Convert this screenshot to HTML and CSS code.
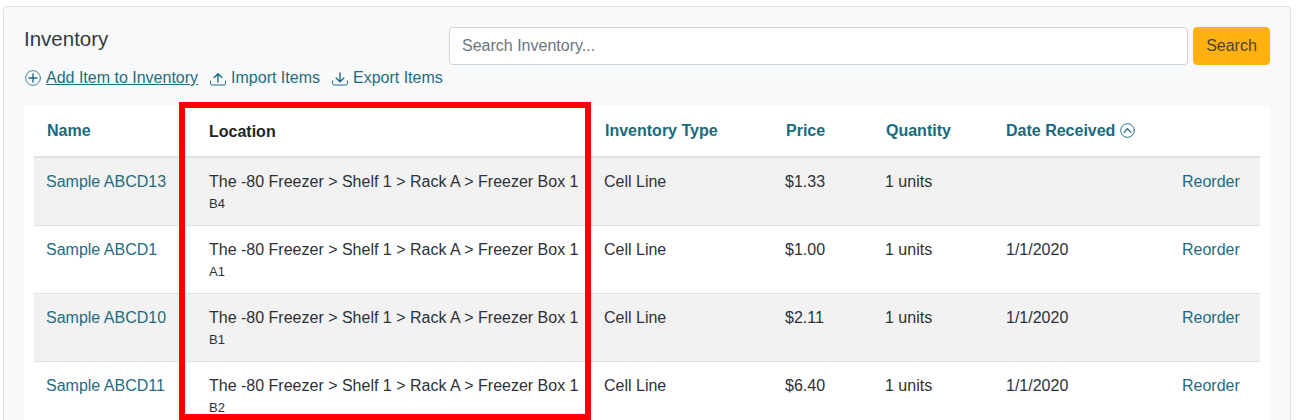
FILE: index.html
```html
<!DOCTYPE html>
<html lang="en">
<head>
<meta charset="utf-8">
<title>Inventory</title>
<link rel="stylesheet" href="styles.css">
</head>
<body>
<main class="panel">
  <header class="top">
    <div class="intro">
      <h1 class="title">Inventory</h1>
      <nav class="actions">
        <a class="action" href="#"><svg class="icon" viewBox="0 0 16 16"><circle class="ring" cx="8" cy="8" r="7.4"/><path class="bold" d="M8 4v8M4 8h8"/></svg><span class="underlined">Add Item to Inventory</span></a>
        <a class="action" href="#"><svg class="icon" viewBox="0 0 16 16"><path d="M.5 11v2.500A1.500 1.500 0 0 0 2 15h12a1.500 1.500 0 0 0 1.500-1.500V11"/><path class="bold" d="M8 12V4M4.200 7.500 8 3.700l3.800 3.800"/></svg><span>Import Items</span></a>
        <a class="action" href="#"><svg class="icon" viewBox="0 0 16 16"><path d="M.5 11v2.500A1.500 1.500 0 0 0 2 15h12a1.500 1.500 0 0 0 1.500-1.500V11"/><path class="bold" d="M8 3v8.500M4.200 8 8 11.800 11.800 8"/></svg><span>Export Items</span></a>
      </nav>
    </div>
    <form class="search">
      <input class="search-input" type="text" placeholder="Search Inventory...">
      <button class="search-button" type="button">Search</button>
    </form>
  </header>
  <section class="card">
    <table class="grid">
      <colgroup>
        <col class="c-name"><col class="c-loc"><col class="c-type"><col class="c-price"><col class="c-qty"><col class="c-date"><col class="c-act">
      </colgroup>
      <thead>
        <tr>
          <th>Name</th>
          <th class="plain">Location</th>
          <th>Inventory Type</th>
          <th>Price</th>
          <th>Quantity</th>
          <th class="date">Date Received <svg class="icon sort" viewBox="0 0 16 16"><circle cx="8" cy="8" r="7.300"/><path class="bold" d="M4.300 10 8 6l3.700 4"/></svg></th>
          <th></th>
        </tr>
      </thead>
      <tbody>
        <tr class="odd">
          <td><a href="#">Sample ABCD13</a></td>
          <td>The -80 Freezer &gt; Shelf 1 &gt; Rack A &gt; Freezer Box 1<small class="slot">B4</small></td>
          <td>Cell Line</td><td>$1.33</td><td>1 units</td><td></td>
          <td><a href="#">Reorder</a></td>
        </tr>
        <tr>
          <td><a href="#">Sample ABCD1</a></td>
          <td>The -80 Freezer &gt; Shelf 1 &gt; Rack A &gt; Freezer Box 1<small class="slot">A1</small></td>
          <td>Cell Line</td><td>$1.00</td><td>1 units</td><td>1/1/2020</td>
          <td><a href="#">Reorder</a></td>
        </tr>
        <tr class="odd">
          <td><a href="#">Sample ABCD10</a></td>
          <td>The -80 Freezer &gt; Shelf 1 &gt; Rack A &gt; Freezer Box 1<small class="slot">B1</small></td>
          <td>Cell Line</td><td>$2.11</td><td>1 units</td><td>1/1/2020</td>
          <td><a href="#">Reorder</a></td>
        </tr>
        <tr>
          <td><a href="#">Sample ABCD11</a></td>
          <td>The -80 Freezer &gt; Shelf 1 &gt; Rack A &gt; Freezer Box 1<small class="slot">B2</small></td>
          <td>Cell Line</td><td>$6.40</td><td>1 units</td><td>1/1/2020</td>
          <td><a href="#">Reorder</a></td>
        </tr>
      </tbody>
    </table>
  </section>
</main>
<div class="highlight"></div>
</body>
</html>
```
FILE: styles.css
```css
* { box-sizing: border-box; }
html, body { height: 420px; overflow: hidden; }
body {
  margin: 0;
  padding: 6px 7px 0 3px;
  background: #fff;
  color: #2d3135;
  font: 16px/24px "Liberation Sans", Arial, sans-serif;
  position: relative;
}
a { color: #1f6c80; text-decoration: none; }
.panel {
  background: #f8f9fa;
  border: 1px solid #dfdfdf;
  border-radius: 4px;
  padding: 20px 20px 0;
  height: 420px;
  overflow: hidden;
}
.top { display: flex; align-items: flex-start; height: 79px; }
.intro { width: 425px; flex: none; }
.title { margin: 0; font-size: 20.5px; font-weight: 400; line-height: 24px; color: #343a40; }
.actions { display: flex; gap: 12px; margin-top: 15px; margin-left: 1px; }
.action { display: flex; align-items: center; gap: 5px; white-space: nowrap; }
.underlined { text-decoration: underline; }
.icon {
  width: 16px; height: 16px; flex: none;
  fill: none; stroke: #1f6c80; stroke-width: 1; stroke-linecap: round; stroke-linejoin: round;
}
.ring { stroke-opacity: .8; }
.bold { stroke-width: 1.4; }
.sort { width: 15px; height: 15px; vertical-align: -2px; }
.search { flex: 1; display: flex; gap: 5px; }
.search-input {
  flex: 1; min-width: 0; height: 38px;
  padding: 6px 12px;
  border: 1px solid #ced4da; border-radius: 4px;
  background: #fff; color: #495057;
  font: inherit;
}
.search-input::placeholder { color: #6c757d; opacity: 1; }
.search-button {
  width: 77px; height: 38px; padding: 0;
  border: 1px solid #ffb20f; border-radius: 4px;
  background: #ffb20f; color: #4a4338;
  font: inherit;
}
.card { background: #fff; border-radius: 4px; padding: 0 10px; }
.grid { width: 1226px; table-layout: fixed; border-collapse: collapse; }
.c-name { width: 163px; }
.c-loc { width: 395px; }
.c-type { width: 181px; }
.c-price { width: 100px; }
.c-qty { width: 121px; }
.c-date { width: 176px; }
.c-act { width: 90px; }
th {
  height: 51px; padding: 0 12px 0 13px;
  text-align: left; font-weight: 700; color: #186a7e;
  border-bottom: 2px solid #dee2e6;
  white-space: nowrap;
}
th.plain { color: #212529; padding: 2px 12px 0; }
th.date { padding-left: 12px; }
td {
  height: 68px; padding: 12px 12px 0;
  vertical-align: top;
  border-bottom: 1px solid #dee2e6;
  white-space: nowrap;
}
.odd td { background: #f2f2f2; }
.slot { display: block; font-size: 13px; line-height: 18px; margin-top: 1px; }
.highlight {
  position: absolute; left: 179px; top: 102px;
  width: 412px; height: 318px;
  border: 6px solid #f00;
}
```
